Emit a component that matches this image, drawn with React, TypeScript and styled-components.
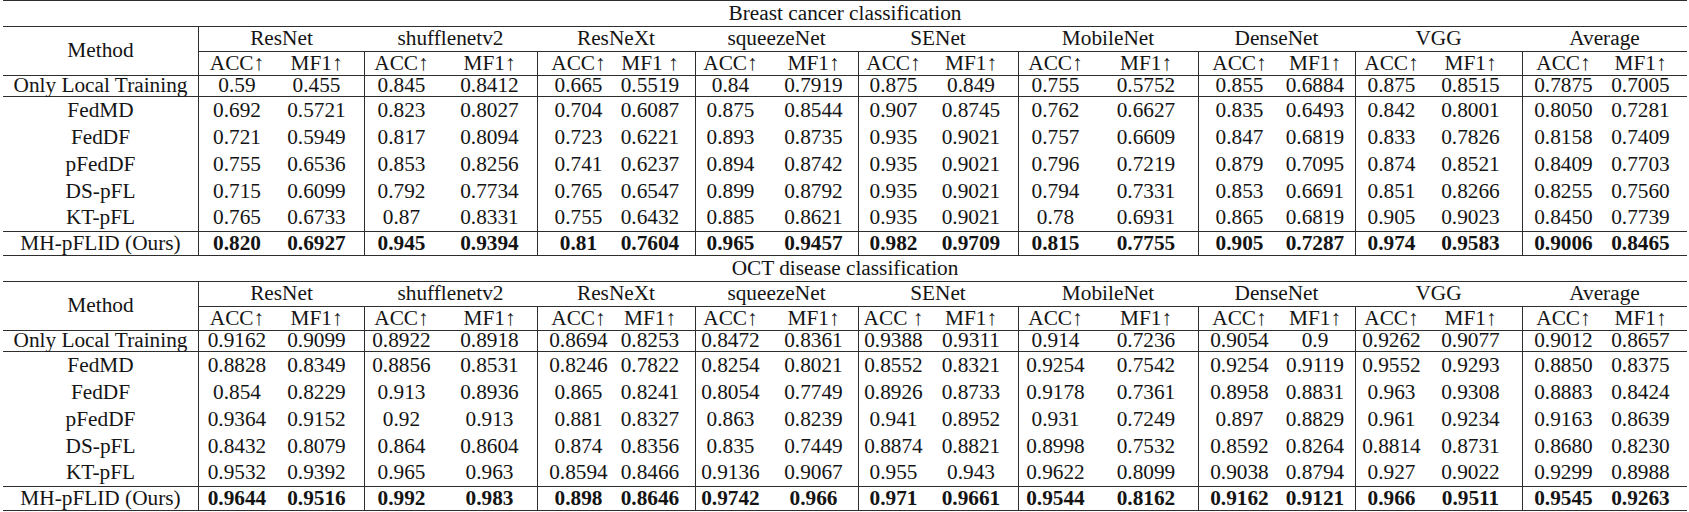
import React from "react";
import styled, { createGlobalStyle, css } from "styled-components";

const GlobalStyle = createGlobalStyle`
  html, body {
    margin: 0;
    background: #ffffff;
  }
  body {
    font-family: "Liberation Serif", "Times New Roman", serif;
    color: #141414;
  }
`;

const RULE = "1px solid #2e2e2e";

// shift > 0 pushes the MF1 column content right, < 0 pushes it left
type Group = { name: string; acc: number; mf1: number; shift: number };

const METHOD_WIDTH = 196;

const GROUPS: Group[] = [
  { name: "ResNet", acc: 76, mf1: 89, shift: -6 },
  { name: "shufflenetv2", acc: 74, mf1: 99, shift: 4 },
  { name: "ResNeXt", acc: 82, mf1: 76, shift: -14 },
  { name: "squeezeNet", acc: 70, mf1: 93, shift: 4 },
  { name: "SENet", acc: 70, mf1: 90, shift: -4 },
  { name: "MobileNet", acc: 74, mf1: 106, shift: 2 },
  { name: "DenseNet", acc: 82, mf1: 75, shift: -5 },
  { name: "VGG", acc: 72, mf1: 95, shift: -8 },
  { name: "Average", acc: 82, mf1: 83, shift: -10 },
];

const COLS = [
  `${METHOD_WIDTH}px`,
  ...GROUPS.flatMap((g) => [`${g.acc}px`, `${g.mf1}px`]),
].join(" ");

type Row = { method: string; values: string[] };

type TableData = {
  title: string;
  subHeads: string[];
  local: Row;
  rows: Row[];
  ours: Row;
};

const r = (method: string, line: string): Row => ({
  method,
  values: line.split(" "),
});

const BREAST: TableData = {
  title: "Breast cancer classification",
  subHeads: [
    "ACC↑", "MF1↑", "ACC↑", "MF1↑", "ACC↑", "MF1 ↑", "ACC↑", "MF1↑", "ACC↑",
    "MF1↑", "ACC↑", "MF1↑", "ACC↑", "MF1↑", "ACC↑", "MF1↑", "ACC↑", "MF1↑",
  ],
  local: r("Only Local Training", "0.59 0.455 0.845 0.8412 0.665 0.5519 0.84 0.7919 0.875 0.849 0.755 0.5752 0.855 0.6884 0.875 0.8515 0.7875 0.7005"),
  rows: [
    r("FedMD", "0.692 0.5721 0.823 0.8027 0.704 0.6087 0.875 0.8544 0.907 0.8745 0.762 0.6627 0.835 0.6493 0.842 0.8001 0.8050 0.7281"),
    r("FedDF", "0.721 0.5949 0.817 0.8094 0.723 0.6221 0.893 0.8735 0.935 0.9021 0.757 0.6609 0.847 0.6819 0.833 0.7826 0.8158 0.7409"),
    r("pFedDF", "0.755 0.6536 0.853 0.8256 0.741 0.6237 0.894 0.8742 0.935 0.9021 0.796 0.7219 0.879 0.7095 0.874 0.8521 0.8409 0.7703"),
    r("DS-pFL", "0.715 0.6099 0.792 0.7734 0.765 0.6547 0.899 0.8792 0.935 0.9021 0.794 0.7331 0.853 0.6691 0.851 0.8266 0.8255 0.7560"),
    r("KT-pFL", "0.765 0.6733 0.87 0.8331 0.755 0.6432 0.885 0.8621 0.935 0.9021 0.78 0.6931 0.865 0.6819 0.905 0.9023 0.8450 0.7739"),
  ],
  ours: r("MH-pFLID (Ours)", "0.820 0.6927 0.945 0.9394 0.81 0.7604 0.965 0.9457 0.982 0.9709 0.815 0.7755 0.905 0.7287 0.974 0.9583 0.9006 0.8465"),
};

const OCT: TableData = {
  title: "OCT disease classification",
  subHeads: [
    "ACC↑", "MF1↑", "ACC↑", "MF1↑", "ACC↑", "MF1↑", "ACC↑", "MF1↑", "ACC ↑",
    "MF1↑", "ACC↑", "MF1↑", "ACC↑", "MF1↑", "ACC↑", "MF1↑", "ACC↑", "MF1↑",
  ],
  local: r("Only Local Training", "0.9162 0.9099 0.8922 0.8918 0.8694 0.8253 0.8472 0.8361 0.9388 0.9311 0.914 0.7236 0.9054 0.9 0.9262 0.9077 0.9012 0.8657"),
  rows: [
    r("FedMD", "0.8828 0.8349 0.8856 0.8531 0.8246 0.7822 0.8254 0.8021 0.8552 0.8321 0.9254 0.7542 0.9254 0.9119 0.9552 0.9293 0.8850 0.8375"),
    r("FedDF", "0.854 0.8229 0.913 0.8936 0.865 0.8241 0.8054 0.7749 0.8926 0.8733 0.9178 0.7361 0.8958 0.8831 0.963 0.9308 0.8883 0.8424"),
    r("pFedDF", "0.9364 0.9152 0.92 0.913 0.881 0.8327 0.863 0.8239 0.941 0.8952 0.931 0.7249 0.897 0.8829 0.961 0.9234 0.9163 0.8639"),
    r("DS-pFL", "0.8432 0.8079 0.864 0.8604 0.874 0.8356 0.835 0.7449 0.8874 0.8821 0.8998 0.7532 0.8592 0.8264 0.8814 0.8731 0.8680 0.8230"),
    r("KT-pFL", "0.9532 0.9392 0.965 0.963 0.8594 0.8466 0.9136 0.9067 0.955 0.943 0.9622 0.8099 0.9038 0.8794 0.927 0.9022 0.9299 0.8988"),
  ],
  ours: r("MH-pFLID (Ours)", "0.9644 0.9516 0.992 0.983 0.898 0.8646 0.9742 0.966 0.971 0.9661 0.9544 0.8162 0.9162 0.9121 0.966 0.9511 0.9545 0.9263"),
};

const Page = styled.div`
  width: 1689px;
  box-sizing: border-box;
  padding: 0 2px 0 3px;
`;

const Grid = styled.div<{ $top?: boolean }>`
  display: grid;
  grid-template-columns: ${COLS};
  grid-template-rows: 26px 25px 24px 21px repeat(5, 27px) 24px;
  font-size: 21.3px;
  line-height: 1;
  border-top: ${({ $top }) => ($top ? RULE : "none")};
`;

const Cell = styled.div<{
  $sep?: boolean;
  $bottom?: boolean;
  $method?: boolean;
  $bold?: boolean;
  $shift?: number;
}>`
  box-sizing: border-box;
  display: flex;
  align-items: center;
  justify-content: center;
  white-space: nowrap;
  padding-left: ${({ $shift }) => Math.max($shift || 0, 0)}px;
  padding-right: ${({ $shift }) => Math.max(-($shift || 0), 0)}px;

  ${({ $sep }) =>
    $sep &&
    css`
      border-left: ${RULE};
    `}
  ${({ $method }) =>
    $method &&
    css`
      border-right: ${RULE};
    `}
  ${({ $bottom }) =>
    $bottom &&
    css`
      border-bottom: ${RULE};
    `}
  ${({ $bold }) =>
    $bold &&
    css`
      font-weight: 700;
    `}
`;

const Title = styled(Cell)`
  grid-column: 1 / -1;
  border-bottom: ${RULE};
  padding-top: 1px;
`;

const MethodHead = styled(Cell)`
  grid-row: span 2;
  border-bottom: ${RULE};
`;

const GroupHead = styled(Cell)`
  grid-column: span 2;
  border-bottom: ${RULE};
`;

const ValueCells = ({
  values,
  bottom,
  bold,
}: {
  values: string[];
  bottom?: boolean;
  bold?: boolean;
}) => (
  <>
    {values.map((v, i) => {
      const isAcc = i % 2 === 0;
      return (
        <Cell
          key={i}
          $sep={isAcc && i > 0}
          $bottom={bottom}
          $bold={bold}
          $shift={isAcc ? 0 : GROUPS[Math.floor(i / 2)].shift}
        >
          {v}
        </Cell>
      );
    })}
  </>
);

const DataRow = ({
  row,
  bottom,
  bold,
}: {
  row: Row;
  bottom?: boolean;
  bold?: boolean;
}) => (
  <>
    <Cell $method $bottom={bottom}>
      {row.method}
    </Cell>
    <ValueCells values={row.values} bottom={bottom} bold={bold} />
  </>
);

const ResultTable = ({ data, top }: { data: TableData; top?: boolean }) => (
  <Grid $top={top}>
    <Title>{data.title}</Title>
    <MethodHead $method>Method</MethodHead>
    {GROUPS.map((g) => (
      <GroupHead key={g.name}>{g.name}</GroupHead>
    ))}
    <ValueCells values={data.subHeads} bottom />
    <DataRow row={data.local} bottom />
    {data.rows.map((row, i) => (
      <DataRow
        key={row.method}
        row={row}
        bottom={i === data.rows.length - 1}
      />
    ))}
    <DataRow row={data.ours} bottom bold />
  </Grid>
);

const App = () => (
  <>
    <GlobalStyle />
    <Page>
      <ResultTable data={BREAST} top />
      <ResultTable data={OCT} />
    </Page>
  </>
);

export default App;
